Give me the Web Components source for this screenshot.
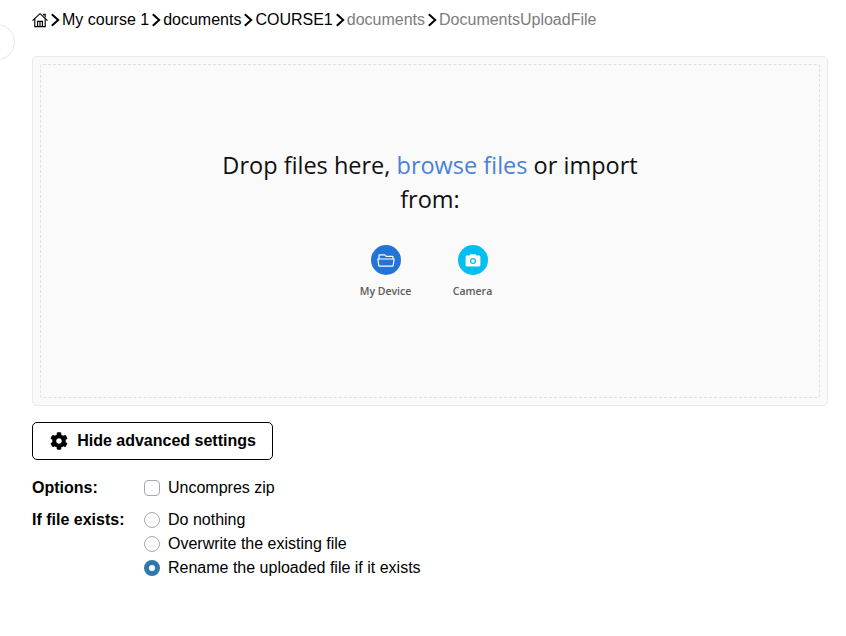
<!DOCTYPE html>
<html lang="en"><head><meta charset="utf-8"><title>Upload</title>
<style>
html,body{margin:0;padding:0;background:#fff;font-family:"Liberation Sans",Arial,sans-serif;color:#000}
body{width:846px;height:636px;overflow:hidden;position:relative}
</style></head><body>
<template id="t-crumbs"><style>
:host{display:flex;align-items:center;height:16px;font-size:16px;line-height:16px;gap:1px;white-space:nowrap}
svg{display:block;flex:none}
.g{color:#7d7d7d}
</style>
<svg width="16" height="16" viewBox="0 0 16 16" fill="none" stroke="#000" stroke-width="1.15"><path d="M.5 8.6 8 1.7l7.5 6.9"/><path d="M2.8 6.8v7.8h10.4V6.8"/><path d="M5.6 14.6V9.4h4.8v5.2"/><path d="M8 9.4v5.2"/><path d="M11.6 3.4V2.2h1.6v3.4"/></svg>
<svg width="12" height="16" viewBox="0 0 12 16" fill="none" stroke="#000" stroke-width="2"><path d="M2.8 2.2 9.2 8l-6.4 5.8"/></svg>
<span>My course 1</span>
<svg width="12" height="16" viewBox="0 0 12 16" fill="none" stroke="#000" stroke-width="2"><path d="M2.8 2.2 9.2 8l-6.4 5.8"/></svg>
<span>documents</span>
<svg width="12" height="16" viewBox="0 0 12 16" fill="none" stroke="#000" stroke-width="2"><path d="M2.8 2.2 9.2 8l-6.4 5.8"/></svg>
<span>COURSE1</span>
<svg width="12" height="16" viewBox="0 0 12 16" fill="none" stroke="#000" stroke-width="2"><path d="M2.8 2.2 9.2 8l-6.4 5.8"/></svg>
<span class="g">documents</span>
<svg width="12" height="16" viewBox="0 0 12 16" fill="none" stroke="#000" stroke-width="2"><path d="M2.8 2.2 9.2 8l-6.4 5.8"/></svg>
<span class="g">DocumentsUploadFile</span>
</template>

<template id="t-drop"><style>
:host{display:block;box-sizing:border-box;height:350px;background:#fafafa;border:1px solid #eaeaea;border-radius:5px;padding:7px}
.in{box-sizing:border-box;height:100%;border:1px dashed #dfdfdf;border-radius:3px;display:flex;flex-direction:column;align-items:center;padding-top:83px;font-family:"Open Sans","Noto Sans",sans-serif}
h1{margin:0;width:460px;font-weight:400;font-size:23.5px;line-height:34px;text-align:center;color:#101010}
a{color:#4a80d8}
.src{display:flex;gap:35px;margin-top:29px;padding-right:2px}
</style><div class="in"><h1>Drop files here, <a>browse files</a> or import from:</h1><div class="src"><slot></slot></div></div></template>

<template id="t-src"><style>
:host{display:flex;flex-direction:column;align-items:center;width:52px;font-family:"Open Sans","Noto Sans",sans-serif;font-size:10.5px;font-weight:600;color:#5a5a5a;line-height:14px;white-space:nowrap}
.ic{width:30px;height:30px;border-radius:50%;display:flex;align-items:center;justify-content:center;margin-bottom:9px;background:var(--bg)}
svg{display:block}
</style><div class="ic"><slot name="icon"></slot></div><slot></slot></template>

<template id="t-btn"><style>
:host{display:inline-flex;box-sizing:border-box;height:38px;width:241px;padding-left:1px;align-items:center;justify-content:center;gap:9px;border:1px solid #000;border-radius:5px;font-weight:700;font-size:16px;background:#fff}
svg{display:block;flex:none}
</style><svg width="18" height="18" viewBox="0 0 512 512"><path fill="#000" d="M487.4 315.7l-42.6-24.6c4.3-23.2 4.3-47 0-70.2l42.6-24.6c4.9-2.8 7.1-8.6 5.5-14-11.1-35.6-30-67.8-54.7-94.6-3.8-4.1-10-5.1-14.8-2.3L380.8 110c-17.9-15.4-38.5-27.3-60.8-35.1V25.8c0-5.6-3.9-10.5-9.4-11.7-36.7-8.2-74.3-7.8-109.2 0-5.5 1.2-9.4 6.1-9.4 11.7V75c-22.2 7.9-42.8 19.8-60.8 35.1L88.7 85.5c-4.9-2.8-11-1.9-14.8 2.3-24.7 26.7-43.6 58.9-54.7 94.6-1.7 5.4.6 11.2 5.5 14L67.3 221c-4.3 23.2-4.3 47 0 70.2l-42.6 24.6c-4.9 2.8-7.1 8.6-5.5 14 11.1 35.6 30 67.8 54.7 94.6 3.8 4.1 10 5.1 14.8 2.3l42.6-24.6c17.9 15.4 38.5 27.3 60.8 35.1v49.2c0 5.6 3.9 10.5 9.4 11.7 36.7 8.2 74.3 7.8 109.2 0 5.5-1.2 9.4-6.1 9.4-11.7v-49.2c22.2-7.9 42.8-19.8 60.8-35.1l42.6 24.6c4.9 2.8 11 1.9 14.8-2.3 24.7-26.7 43.6-58.9 54.7-94.6 1.5-5.5-.7-11.3-5.6-14.1zM256 336c-44.1 0-80-35.9-80-80s35.9-80 80-80 80 35.9 80 80-35.9 80-80 80z"/></svg><slot></slot></template>

<template id="t-opt"><style>
:host{display:grid;grid-template-columns:112px 1fr;font-size:16px;line-height:24px}
.l{font-weight:700}
.v{display:flex;flex-direction:column}
</style><div class="l"><slot name="label"></slot></div><div class="v"><slot></slot></div></template>

<template id="t-choice"><style>
:host{display:flex;align-items:center;gap:8px;height:24px;font-size:16px;white-space:nowrap}
.b{box-sizing:border-box;width:16px;height:16px;border:1px solid #a9a9b4;background:#fff;flex:none;border-radius:50%}
:host([type=check]) .b{border-radius:4px}
:host([checked]) .b{border:5px solid #2f79aa;background:#fff}
</style><span class="b"></span><slot></slot></template>

<template id="t-page"><style>
:host{display:block;box-sizing:border-box;padding:12px 18px 0 32px;width:846px}
.top{margin-bottom:28px}
.btn{margin:16px 0 16px;display:block}
.opts{display:flex;flex-direction:column;gap:8px}
.ring{position:absolute;left:-21px;top:24px;width:36px;height:36px;box-sizing:border-box;border:1px solid #e3e6ec;border-radius:50%;background:#fff}
</style><div class="ring"></div>
<div class="top"><slot name="crumbs"></slot></div>
<slot name="drop"></slot>
<div class="btn"><slot name="btn"></slot></div>
<div class="opts"><slot></slot></div></template>

<upload-page>
  <bread-crumbs slot="crumbs"></bread-crumbs>
  <drop-zone slot="drop">
    <source-btn style="--bg:#2275d7">
      <svg slot="icon" width="18" height="13" viewBox="0 0 18 13" fill="none" stroke="#fff" stroke-width="1.2" stroke-linejoin="round"><path d="M2 5V1.5c0-.4.3-.7.7-.7h5l1.5 1.5h6.1c.4 0 .7.3.7.7V5"/><path d="M.8 5h16.4l-1 6.3c-.1.5-.4.8-.8.8H2.6c-.4 0-.7-.3-.8-.8z"/></svg>
      My Device
    </source-btn>
    <source-btn style="--bg:#03bfef">
      <svg slot="icon" width="16" height="14" viewBox="0 0 16 14"><path fill="#fff" fill-rule="evenodd" d="M5.3 1.2 4.6 2.6H2C1.2 2.6.6 3.2.6 4v8c0 .8.6 1.4 1.4 1.4h12c.8 0 1.4-.6 1.4-1.4V4c0-.8-.6-1.4-1.4-1.4h-2.6l-.7-1.4zM8 5a3 3 0 1 1 0 6 3 3 0 0 1 0-6zm0 1.3a1.7 1.7 0 1 0 0 3.4 1.7 1.7 0 0 0 0-3.4z"/></svg>
      Camera
    </source-btn>
  </drop-zone>
  <adv-button slot="btn">Hide advanced settings</adv-button>
  <option-row><span slot="label">Options:</span>
    <choice-item type="check">Uncompres zip</choice-item></option-row>
  <option-row><span slot="label">If file exists:</span>
    <choice-item>Do nothing</choice-item>
    <choice-item>Overwrite the existing file</choice-item>
    <choice-item checked>Rename the uploaded file if it exists</choice-item></option-row>
</upload-page>
<script>
const reg=(n,t)=>customElements.define(n,class extends HTMLElement{constructor(){super();this.attachShadow({mode:'open'}).appendChild(document.getElementById(t).content.cloneNode(true));}});
reg('bread-crumbs','t-crumbs');reg('drop-zone','t-drop');reg('source-btn','t-src');reg('adv-button','t-btn');reg('option-row','t-opt');reg('choice-item','t-choice');reg('upload-page','t-page');
</script>
</body></html>
